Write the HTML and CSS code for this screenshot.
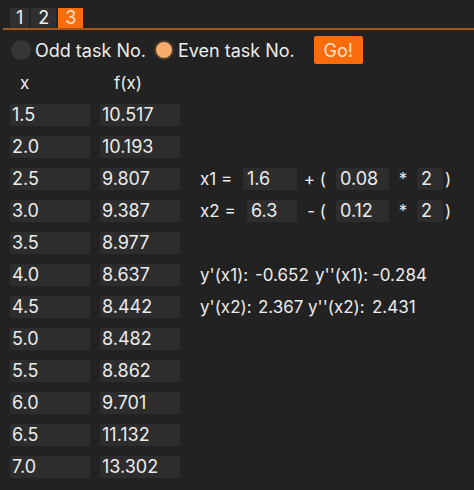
FILE: index.html
```html
<!DOCTYPE html>
<html>
<head>
<meta charset="utf-8">
<link rel="stylesheet" href="styles.css">
</head>
<body>
<div class="tabs">
  <span class="tab">1</span>
  <span class="tab">2</span>
  <span class="tab active">3</span>
</div>
<div class="controls">
  <label class="radio"><span class="dot"></span><span class="rtext">Odd task No.</span></label>
  <label class="radio even"><span class="dot on"></span><span class="rtext">Even task No.</span></label>
  <button class="go">Go!</button>
</div>
<div class="table">
  <div class="row head"><span class="hx">x</span><span class="hf">f(x)</span></div>
  <div class="row"><span class="box">1.5</span><span class="box">10.517</span></div>
  <div class="row"><span class="box">2.0</span><span class="box">10.193</span></div>
  <div class="row"><span class="box">2.5</span><span class="box">9.807</span>
    <div class="calc"><span class="lbl">x1 =</span><span class="box sm a">1.6</span><span class="op">+ (</span><span class="box sm b">0.08</span><span class="star">*</span><span class="box sm c">2</span><span class="par">)</span></div>
  </div>
  <div class="row"><span class="box">3.0</span><span class="box">9.387</span>
    <div class="calc"><span class="lbl">x2 =</span><span class="box sm a2">6.3</span><span class="op">- (</span><span class="box sm b">0.12</span><span class="star">*</span><span class="box sm c">2</span><span class="par">)</span></div>
  </div>
  <div class="row"><span class="box">3.5</span><span class="box">8.977</span></div>
  <div class="row"><span class="box">4.0</span><span class="box">8.637</span>
    <div class="deriv"><span class="d1">y'(x1):</span><span class="d2">-0.652</span><span class="d3">y''(x1):</span><span class="d4">-0.284</span></div>
  </div>
  <div class="row"><span class="box">4.5</span><span class="box">8.442</span>
    <div class="deriv"><span class="d1 k2">y'(x2):</span><span class="d2 v2">2.367</span><span class="d3 l2">y''(x2):</span><span class="d4">2.431</span></div>
  </div>
  <div class="row"><span class="box">5.0</span><span class="box">8.482</span></div>
  <div class="row"><span class="box">5.5</span><span class="box">8.862</span></div>
  <div class="row"><span class="box">6.0</span><span class="box">9.701</span></div>
  <div class="row"><span class="box">6.5</span><span class="box">11.132</span></div>
  <div class="row"><span class="box">7.0</span><span class="box">13.302</span></div>
</div>
</body>
</html>
```
FILE: styles.css
```css
html, body {
  margin: 0;
  padding: 0;
  background: #222222;
}
body {
  width: 474px;
  height: 490px;
  overflow: hidden;
  color: #ececec;
  font-family: Inter, "Noto Sans", sans-serif;
  font-size: 17px;
}
.tabs {
  display: flex;
  gap: 2px;
  margin: 8px 0 0 3px;
  padding-left: 7px;
  border-bottom: 2px solid #a4561f;
  height: 20px;
}
.tab {
  display: flex;
  align-items: center;
  justify-content: center;
  height: 20px;
  padding: 0 7px;
  background: #303030;
  font-size: 18px;
  line-height: 20px;
  color: #f0f0f0;
}
.tab:first-child { padding: 0 6px; }
.tab.active {
  background: #fb6c0c;
  color: #ffe2cc;
}
.controls {
  display: flex;
  align-items: center;
  height: 28px;
  margin-top: 6px;
  padding-left: 11px;
}
.radio {
  display: flex;
  align-items: center;
  font-size: 18px;
}
.dot {
  width: 20px;
  height: 20px;
  border-radius: 50%;
  background: #363636;
  margin-right: 4px;
}
.dot.on {
  width: 16px;
  height: 16px;
  background: #f6ad6b;
  border: 2px solid #4a3a2c;
}
.even { margin-left: 8px; }
.go {
  margin-left: 19px;
  height: 28px;
  width: 49px;
  border: none;
  border-radius: 2px;
  background: #fb6c0c;
  color: #ffe2cc;
  font-family: inherit;
  font-size: 18px;
  padding: 0;
}
.table {
  margin-top: 3px;
  padding-left: 10px;
}
.row {
  display: flex;
  align-items: center;
  height: 32px;
  gap: 10px;
}
.head span {
  display: inline-block;
  width: 80px;
}
.hx { text-indent: 10px; }
.hf { text-indent: 14px; }
.box {
  display: inline-block;
  box-sizing: border-box;
  flex: none;
  width: 80px;
  height: 22px;
  line-height: 22px;
  padding: 0 2px;
  background: #2d2d2d;
  border-radius: 2px;
  font-size: 18px;
}
.calc, .deriv {
  display: flex;
  align-items: center;
  margin-left: 10px;
  flex: none;
}
.calc > span, .deriv > span {
  flex: none;
  white-space: nowrap;
}
.lbl { width: 43px; }
.box.sm { padding-left: 4px; }
.box.a { width: 54px; }
.box.a2 { width: 50px; margin-left: 4px; }
.op { width: 29px; text-align: right; margin-right: 10px; }
.box.b { width: 53px; }
.star { width: 28px; text-align: center; }
.box.c { width: 26px; }
.par { margin-left: 2px; }
.d1 { width: 55px; }
.d2 { width: 60px; }
.d3 { width: 57px; }
.d1.k2 { width: 58px; }
.d2.v2 { width: 50px; }
.d3.l2 { width: 64px; }
```
